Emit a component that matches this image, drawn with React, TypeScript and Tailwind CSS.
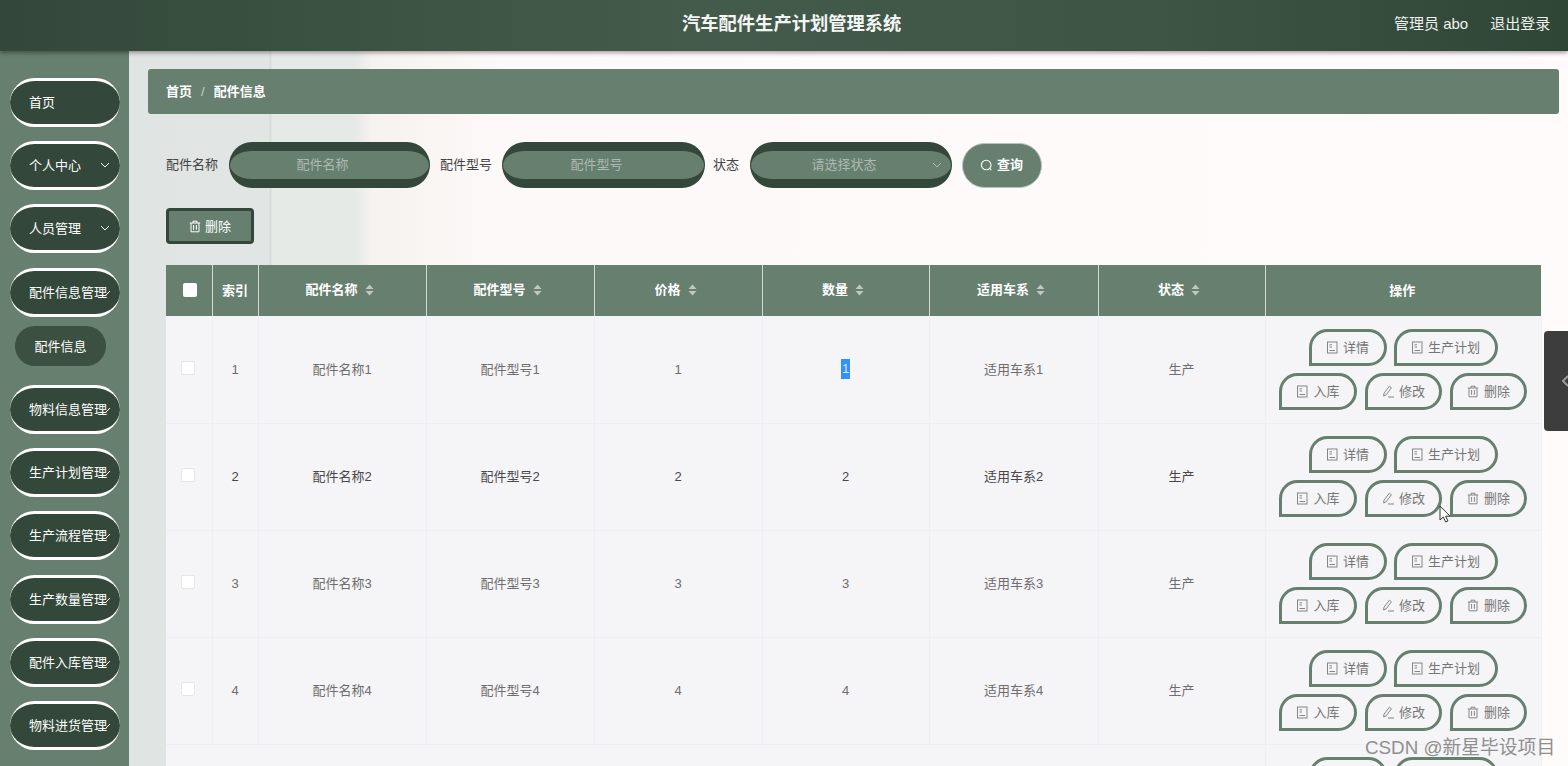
import React from "react";

const FONT = "font-['Liberation_Sans','Noto_Sans_CJK_SC',sans-serif]";

function DocIcon() {
  return (
    <svg width="12" height="13" viewBox="0 0 12 13" fill="none" stroke="#858585" strokeWidth="1" className="shrink-0">
      <rect x="1.5" y="1" width="9.5" height="11" />
      <path d="M3.5 3.8h2.5M3.5 6h2.5M3.5 9.5h5.5" />
    </svg>
  );
}
function TrashIcon({ color = "#858585" }: { color?: string }) {
  return (
    <svg width="12" height="13" viewBox="0 0 12 13" fill="none" stroke={color} strokeWidth="1" className="shrink-0">
      <path d="M.8 3h10.4M4 3V1.2h4V3M2 3v8.8h8V3M4.6 5v4.8M7.4 5v4.8" />
    </svg>
  );
}
function EditIcon() {
  return (
    <svg width="12" height="13" viewBox="0 0 12 13" fill="none" stroke="#858585" strokeWidth="1" className="shrink-0">
      <path d="M7.4 1.2l2 1.6L4.2 9.8 1.6 11 2 8.2zM6 12h6" />
    </svg>
  );
}
function SearchIcon() {
  return (
    <svg width="13" height="13" viewBox="0 0 13 13" fill="none" stroke="currentColor" strokeWidth="1.1" className="shrink-0">
      <circle cx="6.2" cy="6" r="4.8" />
      <path d="M9.8 9.6l1.6 1.6" />
    </svg>
  );
}
function Chevron({ className = "" }: { className?: string }) {
  return (
    <svg width="10" height="6" viewBox="0 0 10 6" fill="none" stroke="currentColor" strokeWidth="1" className={className}>
      <path d="M1 1l4 4 4-4" />
    </svg>
  );
}
function Caret() {
  return (
    <svg width="9" height="12" viewBox="0 0 9 12" className="ml-[7px] shrink-0" fill="#c0c8c3">
      <path d="M4.5 0.5L8.5 5H.5zM4.5 11.5L.5 7h8z" />
    </svg>
  );
}

function MenuItem({ label, arrow, clipped }: { label: string; arrow?: boolean; clipped?: boolean }) {
  return (
    <div className="relative flex h-[49px] w-[110px] shrink-0 items-center rounded-[30px] border-y-[3px] border-white bg-[#33483a] pl-[19px] text-[13px] whitespace-nowrap text-white">
      {label}
      {arrow && <Chevron className="absolute top-[18px] right-[10px] text-white" />}
      {clipped && (
        <svg width="5" height="6" viewBox="0 0 5 6" fill="none" stroke="white" strokeWidth="1" className="absolute top-[19px] right-[9px]">
          <path d="M0 5l4-4" />
        </svg>
      )}
    </div>
  );
}

function OpBtn({ icon, label, w }: { icon?: React.ReactNode; label?: string; w: string }) {
  return (
    <button className={`flex h-[37px] items-center justify-center gap-[5px] rounded-[20px_20px_20px_0] border-[3px] border-[#667f6f] bg-transparent text-[13px] text-[#757575] ${w}`}>
      {icon}
      {label && <span>{label}</span>}
    </button>
  );
}

function Input({ placeholder, w, select }: { placeholder: string; w: string; select?: boolean }) {
  return (
    <div className={`relative flex h-[46px] items-center justify-center rounded-full border-x border-y-[9px] border-[#33483a] bg-[#667f6f] pr-[14px] text-[13px] text-[#aeb9b2] ${w}`}>
      {placeholder}
      {select && <Chevron className="absolute right-[9px] text-[#aeb9b2]" />}
    </div>
  );
}

const heads = [
  { t: "配件名称", w: "w-[168px]" },
  { t: "配件型号", w: "w-[168px]" },
  { t: "价格", w: "w-[168px]" },
  { t: "数量", w: "w-[167px]" },
  { t: "适用车系", w: "w-[169px]" },
  { t: "状态", w: "w-[167px]" },
];

const td = "border-r border-b border-[#edeff3] text-center align-middle";

function Row({ n, selected, dark }: { n: number; selected?: boolean; dark?: boolean }) {
  return (
    <tr className={`h-[107px] bg-[#f5f4f7] text-[13px] ${dark ? "text-[#484848]" : "text-[#6e6e6e]"}`}>
      <td className={td}>
        <span className="inline-block h-[14px] w-[14px] -translate-x-[1px] translate-y-[1px] rounded-[2px] border border-[#e6e6ea] bg-white" />
      </td>
      <td className={td}>{n}</td>
      <td className={td}>配件名称{n}</td>
      <td className={td}>配件型号{n}</td>
      <td className={td}>{n}</td>
      <td className={td}>
        {selected ? <span className="inline-block bg-[#3390ff] px-[1px] leading-[20px] text-[#d5e6fb]">{n}</span> : n}
      </td>
      <td className={td}>适用车系{n}</td>
      <td className={td}>生产</td>
      <td className={td}>
        <div className="flex flex-col items-center gap-[7px]">
          <div className="flex gap-[7px]">
            <OpBtn icon={<DocIcon />} label="详情" w="w-[78px]" />
            <OpBtn icon={<DocIcon />} label="生产计划" w="w-[104px]" />
          </div>
          <div className="flex gap-[8px]">
            <OpBtn icon={<DocIcon />} label="入库" w="w-[78px]" />
            <OpBtn icon={<EditIcon />} label="修改" w="w-[77px]" />
            <OpBtn icon={<TrashIcon />} label="删除" w="w-[77px]" />
          </div>
        </div>
      </td>
    </tr>
  );
}

function PartialRow() {
  return (
    <tr className="h-[107px] bg-[#f5f4f7]">
      <td className={td} colSpan={8} />
      <td className={td}>
        <div className="flex flex-col items-center gap-[7px]">
          <div className="flex gap-[7px]">
            <OpBtn w="w-[78px]" />
            <OpBtn w="w-[104px]" />
          </div>
          <div className="h-[37px]" />
        </div>
      </td>
    </tr>
  );
}

export default function App() {
  return (
    <div className={`relative flex h-[766px] w-[1568px] flex-col overflow-hidden ${FONT} bg-[linear-gradient(90deg,#dfe3e1_0,#e1e5e3_269px,#d9dcda_270px,#d9dcda_271px,#e6eae7_272px,#e6eae7_355px,#f6f2ef_372px,#fdf9f8_500px,#fefbfa_100%)]`}>
      <header className="relative z-10 flex h-[51px] shrink-0 items-center bg-[linear-gradient(90deg,#33483a,#445b4b_45%,#3d5344_75%,#2f4636)] pb-[3px] shadow-[0_2px_4px_rgba(0,0,0,0.35)]">
        <div className="w-full pl-[682px] text-[18.3px] font-bold text-[#f4f6f4]">汽车配件生产计划管理系统</div>
        <div className="absolute top-[13px] left-[1394px] flex gap-[22px] text-[15px] whitespace-nowrap text-[#eef1ee]">
          <span>管理员 abo</span>
          <span>退出登录</span>
        </div>
      </header>

      <div className="flex min-h-0 flex-1">
        <aside className="flex w-[129px] shrink-0 flex-col items-start bg-[#667f6f] pt-[27px] pl-[10px]">
          <MenuItem label="首页" />
          <div className="mt-[14px]"><MenuItem label="个人中心" arrow /></div>
          <div className="mt-[14px]"><MenuItem label="人员管理" arrow /></div>
          <div className="mt-[15px]"><MenuItem label="配件信息管理" clipped /></div>
          <div className="mt-[9px] ml-[5px] flex h-[40px] w-[91px] items-center justify-center rounded-full bg-[#3b5041] pt-[1px] text-[13px] text-white">配件信息</div>
          <div className="mt-[19px]"><MenuItem label="物料信息管理" clipped /></div>
          <div className="mt-[14px]"><MenuItem label="生产计划管理" clipped /></div>
          <div className="mt-[14px]"><MenuItem label="生产流程管理" clipped /></div>
          <div className="mt-[15px]"><MenuItem label="生产数量管理" clipped /></div>
          <div className="mt-[14px]"><MenuItem label="配件入库管理" clipped /></div>
          <div className="mt-[14px]"><MenuItem label="物料进货管理" clipped /></div>
        </aside>

        <main className="min-w-0 flex-1 pt-[18px] pr-[9px] pl-[19px]">
          <div className="flex h-[45px] items-center rounded-[3px] bg-[#667f6f] pl-[18px] text-[13px] text-white">
            <span className="font-bold">首页</span>
            <span className="mx-[9px] text-[#c9d2cc]">/</span>
            <span className="font-bold">配件信息</span>
          </div>

          <div className="pl-[18px]">
            <div className="mt-[28px] flex h-[46px] items-center text-[13px] text-[#444444]">
              <span className="mr-[11px]">配件名称</span>
              <Input placeholder="配件名称" w="w-[201px]" />
              <span className="mr-[10px] ml-[10px]">配件型号</span>
              <Input placeholder="配件型号" w="w-[203px]" />
              <span className="mr-[11px] ml-[8px]">状态</span>
              <Input placeholder="请选择状态" w="w-[202px]" select />
              <button className="ml-[10px] flex h-[45px] w-[80px] items-center justify-center gap-[4px] rounded-full border border-[#b6c3ba] bg-[#667f6f] pr-[1px] text-[13px] font-bold text-white">
                <SearchIcon />
                查询
              </button>
            </div>

            <button className="mt-[20px] flex h-[36px] w-[88px] items-center justify-center gap-[4px] rounded-[4px] border-[3px] border-[#33483a] bg-[#667f6f] pt-[1px] text-[13px] text-white">
              <TrashIcon color="#ffffff" />
              删除
            </button>

            <table className="mt-[21px] w-[1375px] table-fixed border-collapse">
              <thead>
                <tr className="h-[51px] bg-[#667f6f] text-[13px] font-bold text-white">
                  <th className="w-[46px] border-r border-[#d4dbd6]">
                    <span className="inline-block h-[14px] w-[14px] translate-x-[1px] translate-y-[2px] rounded-[2px] bg-white" />
                  </th>
                  <th className="w-[46px] border-r border-[#d4dbd6]">索引</th>
                  {heads.map((h) => (
                    <th key={h.t} className={`${h.w} border-r border-[#d4dbd6]`}>
                      <span className="flex items-center justify-center pr-[5px] pb-[2px]">
                        {h.t}
                        <Caret />
                      </span>
                    </th>
                  ))}
                  <th className="w-[276px] pr-[2px]">操作</th>
                </tr>
              </thead>
              <tbody>
                <Row n={1} selected />
                <Row n={2} dark />
                <Row n={3} />
                <Row n={4} />
                <PartialRow />
              </tbody>
            </table>
          </div>
        </main>
      </div>

      <div className="absolute top-[331px] right-0 flex h-[100px] w-[24px] items-center justify-end rounded-l-[4px] bg-[#3d3d3d]">
        <svg width="6" height="14" viewBox="0 0 6 14" fill="none" stroke="#9a9a9a" strokeWidth="2">
          <path d="M6 2L1 7l5 5" />
        </svg>
      </div>

      <svg width="13" height="19" viewBox="0 0 13 19" className="absolute top-[505px] left-[1439px]" fill="#ffffff" stroke="#333333" strokeWidth="1">
        <path d="M1 1v14l3.4-3 2.2 5 2.3-1-2.2-4.8H11z" />
      </svg>

      <div className="absolute top-[734px] left-[1365px] text-[18.8px] whitespace-nowrap text-[#8f8f8f]">CSDN @新星毕设项目</div>
    </div>
  );
}
